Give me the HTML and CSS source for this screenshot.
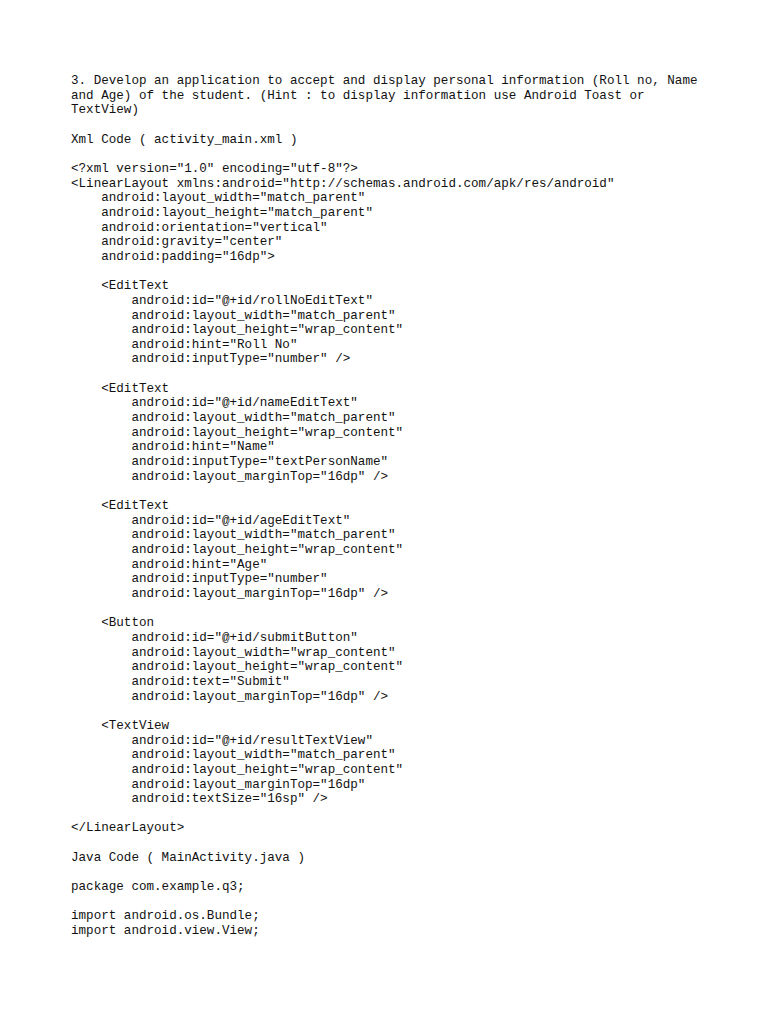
FILE: index.html
```html
<!DOCTYPE html>
<html>
<head>
<meta charset="utf-8">
<link rel="stylesheet" href="styles.css">
</head>
<body>
<main class="page">
<pre class="doc">3. Develop an application to accept and display personal information (Roll no, Name
and Age) of the student. (Hint : to display information use Android Toast or
TextView)

Xml Code ( activity_main.xml )

&lt;?xml version="1.0" encoding="utf-8"?&gt;
&lt;LinearLayout xmlns:android="http://schemas.android.com/apk/res/android"
    android:layout_width="match_parent"
    android:layout_height="match_parent"
    android:orientation="vertical"
    android:gravity="center"
    android:padding="16dp"&gt;

    &lt;EditText
        android:id="@+id/rollNoEditText"
        android:layout_width="match_parent"
        android:layout_height="wrap_content"
        android:hint="Roll No"
        android:inputType="number" /&gt;

    &lt;EditText
        android:id="@+id/nameEditText"
        android:layout_width="match_parent"
        android:layout_height="wrap_content"
        android:hint="Name"
        android:inputType="textPersonName"
        android:layout_marginTop="16dp" /&gt;

    &lt;EditText
        android:id="@+id/ageEditText"
        android:layout_width="match_parent"
        android:layout_height="wrap_content"
        android:hint="Age"
        android:inputType="number"
        android:layout_marginTop="16dp" /&gt;

    &lt;Button
        android:id="@+id/submitButton"
        android:layout_width="wrap_content"
        android:layout_height="wrap_content"
        android:text="Submit"
        android:layout_marginTop="16dp" /&gt;

    &lt;TextView
        android:id="@+id/resultTextView"
        android:layout_width="match_parent"
        android:layout_height="wrap_content"
        android:layout_marginTop="16dp"
        android:textSize="16sp" /&gt;

&lt;/LinearLayout&gt;

Java Code ( MainActivity.java )

package com.example.q3;

import android.os.Bundle;
import android.view.View;</pre>
</main>
</body>
</html>
```

FILE: styles.css
```css
html, body {
  margin: 0;
  padding: 0;
  background: #ffffff;
}

.page {
  width: 768px;
  height: 1024px;
  box-sizing: border-box;
  padding: 74px 0 0 71px;
  overflow: hidden;
}

.doc {
  margin: 0;
  font-family: "Liberation Mono", "DejaVu Sans Mono", monospace;
  font-size: 12.58px;
  line-height: 14.66px;
  color: #111111;
  white-space: pre;
}
```
